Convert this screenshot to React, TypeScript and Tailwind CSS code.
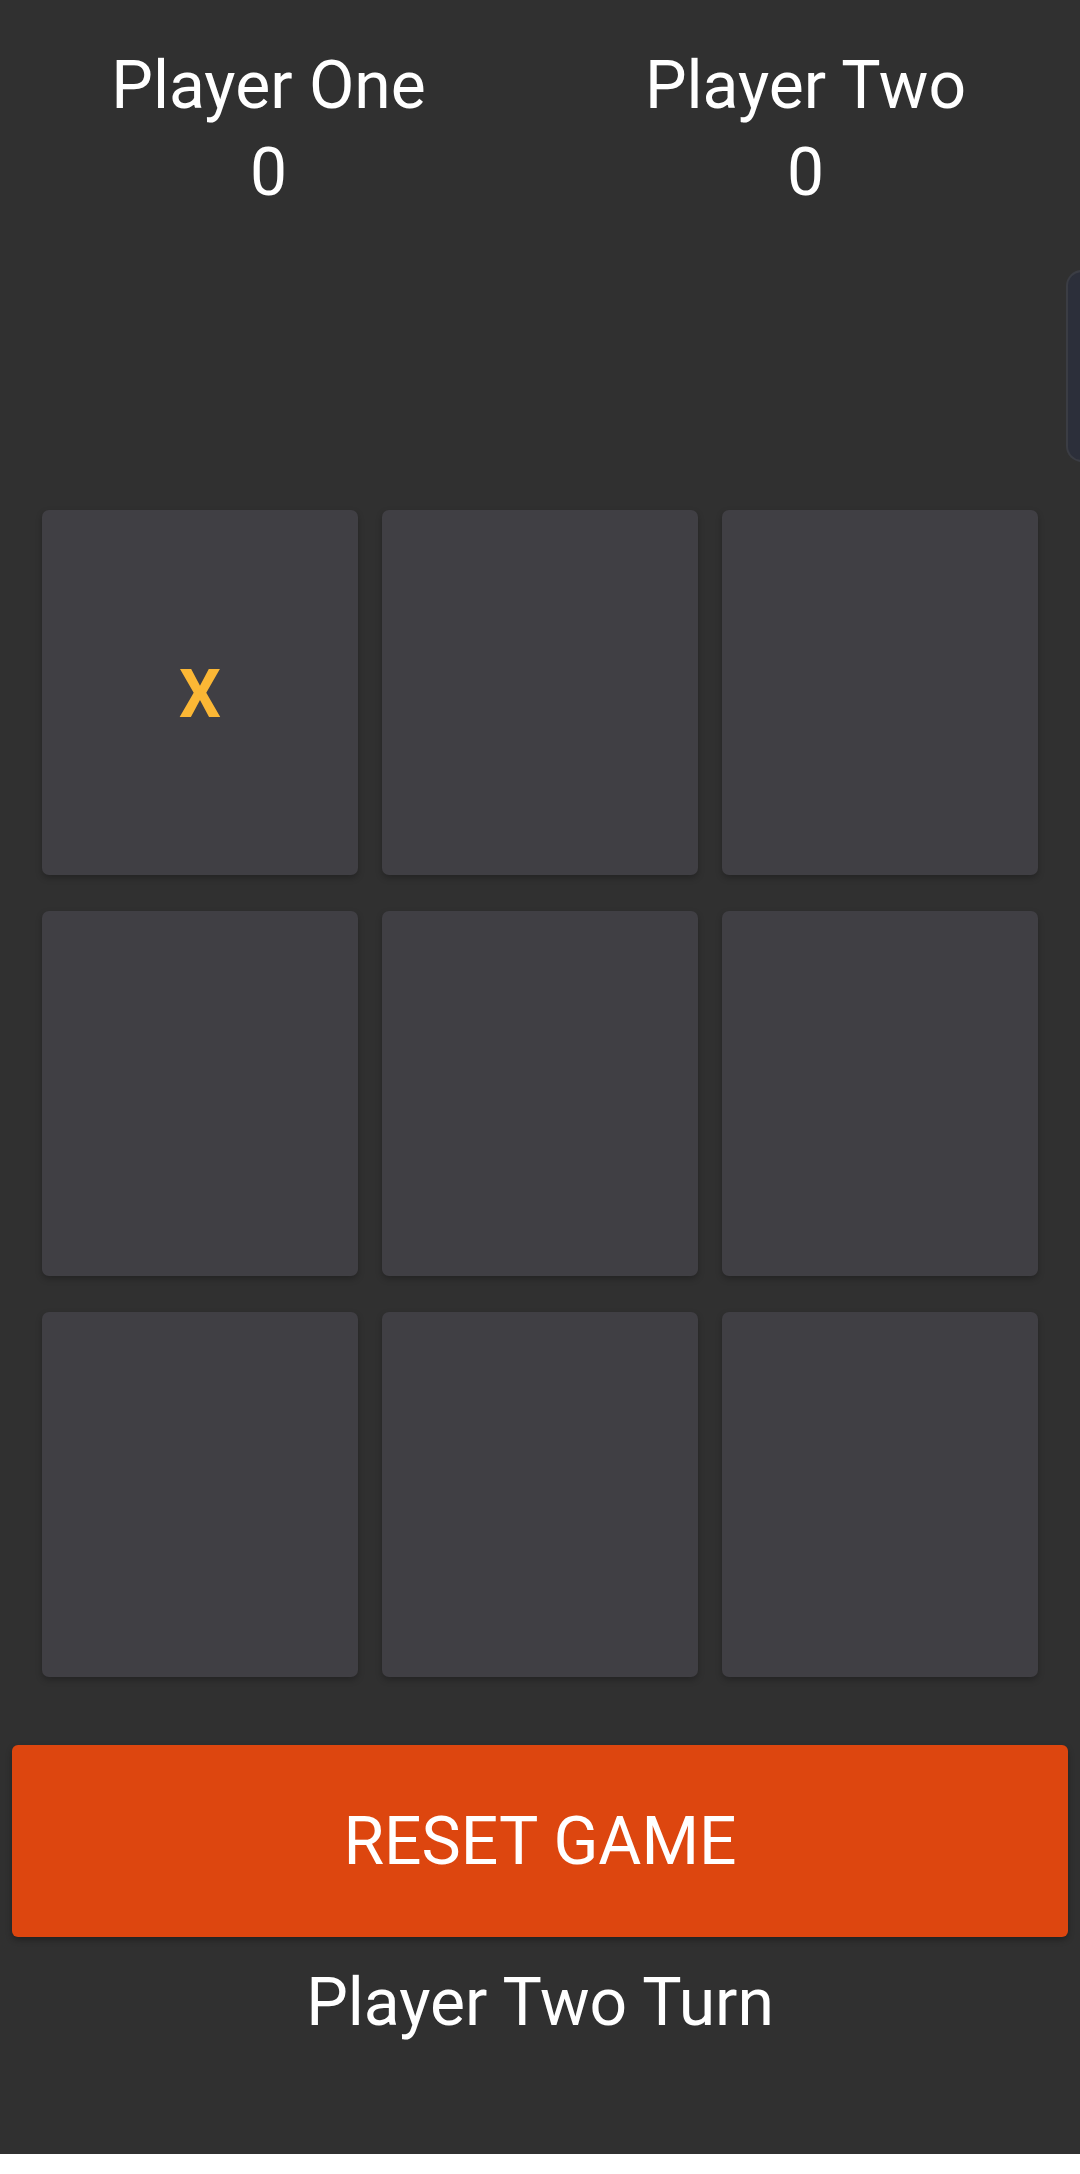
import { useState } from 'react';

type Mark = 'X' | 'O' | null;

export default function App() {
  const [board, setBoard] = useState<Mark[]>(['X', null, null, null, null, null, null, null, null]);
  const [turn, setTurn] = useState<'X' | 'O'>('O');
  const scores = { one: 0, two: 0 };

  const play = (i: number) => {
    if (board[i]) return;
    const next = [...board];
    next[i] = turn;
    setBoard(next);
    setTurn(turn === 'X' ? 'O' : 'X');
  };

  const reset = () => {
    setBoard([null, null, null, null, null, null, null, null, null]);
    setTurn('X');
  };

  return (
    <div className="relative w-[1080px] bg-white font-['Roboto',sans-serif]">
      <div className="flex h-[2154px] flex-col bg-[#303030] text-white">
        {/* scores */}
        <div className="mt-[42px] grid grid-cols-2 pr-[6px] text-center text-[66px] leading-[87px]">
          <div>
            <div>Player One</div>
            <div>{scores.one}</div>
          </div>
          <div>
            <div>Player Two</div>
            <div>{scores.two}</div>
          </div>
        </div>

        {/* board */}
        <div className="mt-[294px] grid grid-cols-3 gap-x-[24px] gap-y-[36px] px-[42px]">
          {board.map((m, i) => (
            <button
              key={i}
              onClick={() => play(i)}
              className="flex h-[365px] items-center justify-center rounded-[7px] bg-[#403f44] pt-[3px] text-[66px] font-bold text-[#fbb735] shadow-[0_3px_6px_rgba(0,0,0,0.25)]"
            >
              {m}
            </button>
          ))}
        </div>

        <button
          onClick={reset}
          className="mx-[12px] mt-[68px] flex h-[192px] items-center justify-center rounded-[6px] bg-[#dd460f] text-[66px] text-white shadow-[0_3px_6px_rgba(0,0,0,0.3)]"
        >
          RESET GAME
        </button>

        <div className="mt-[22px] text-center text-[66px] leading-[87px]">
          {turn === 'O' ? 'Player Two Turn' : 'Player One Turn'}
        </div>
      </div>

      {/* edge panel handle */}
      <div className="absolute left-[1066px] top-[270px] h-[192px] w-[40px] rounded-l-[16px] border-2 border-r-0 border-[#3b3d44] bg-[#2c2f3a]" />
    </div>
  );
}
